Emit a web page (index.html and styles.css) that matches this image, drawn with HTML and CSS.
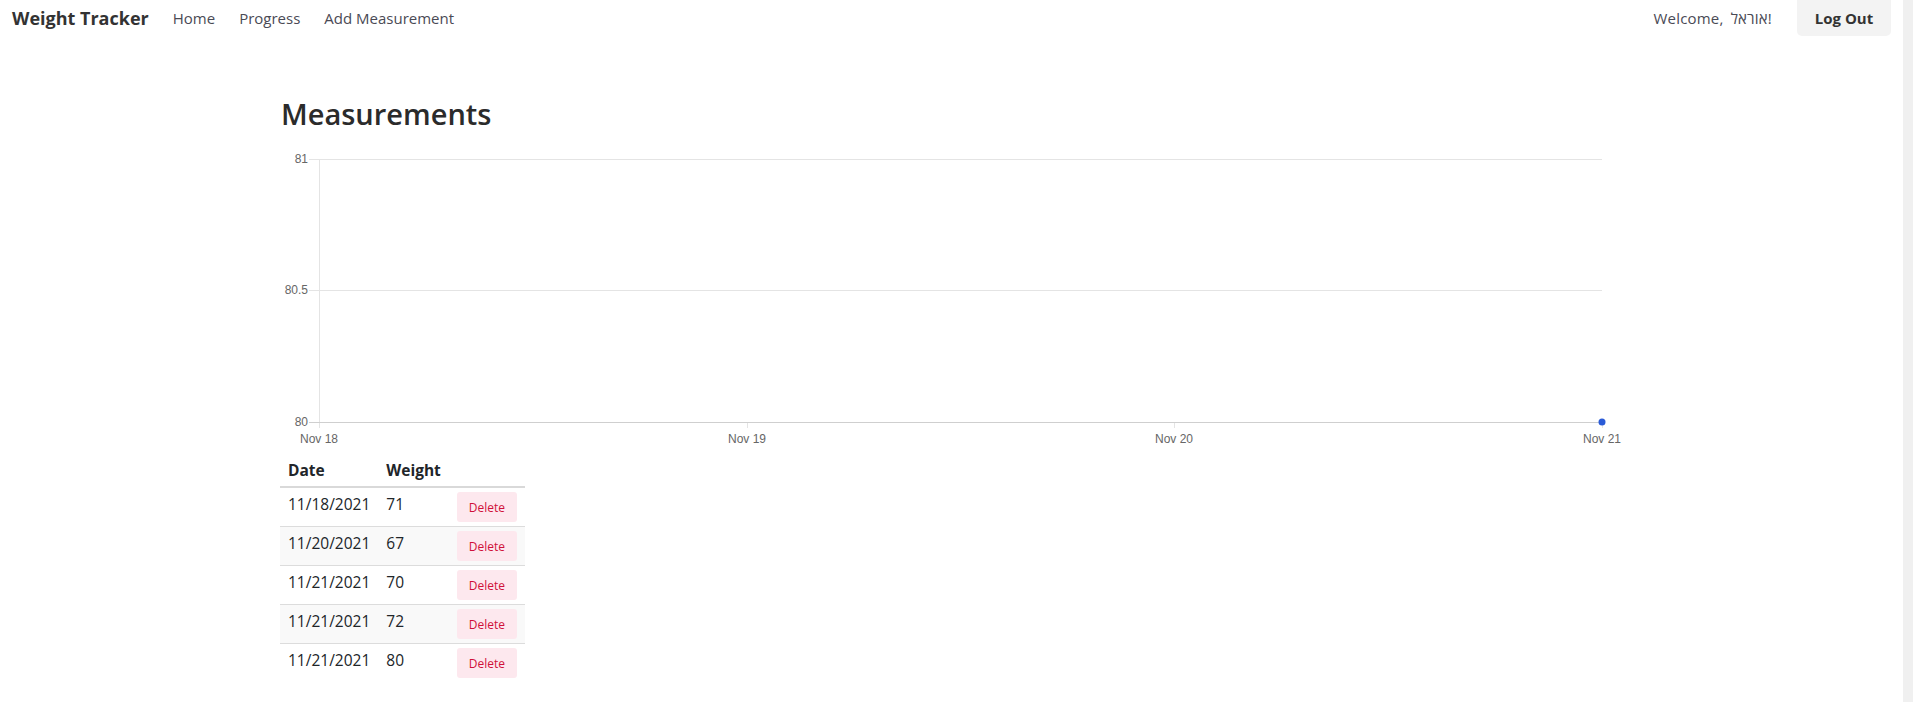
FILE: index.html
```html
<!DOCTYPE html>
<html lang="en">
<head>
  <meta charset="UTF-8" />
  <meta name="viewport" content="width=device-width, initial-scale=1.0" />
  <title>Weight Tracker</title>
  <link rel="stylesheet" href="styles.css">
</head>
<body>
<div class="page">
  <div class="main">
    <nav class="navbar">
      <a class="brand" href="#">Weight Tracker</a>
      <ul class="nav-links">
        <li><a href="#">Home</a></li>
        <li><a href="#">Progress</a></li>
        <li><a href="#">Add Measurement</a></li>
      </ul>
      <div class="nav-right">
        <span class="welcome">Welcome, אוראל!</span>
        <button class="logout">Log Out</button>
      </div>
    </nav>

    <div class="container">
      <h1>Measurements</h1>

      <!-- graphique -->
      <svg class="chart" width="1343" height="304" viewBox="0 0 1343 304">
        <g stroke="#e4e4e4" stroke-width="1">
          <line x1="29" y1="9.5" x2="1322" y2="9.5" />
          <line x1="29" y1="140.5" x2="1322" y2="140.5" />
          <line x1="39.5" y1="9" x2="39.5" y2="278" />
          <line x1="467.5" y1="272" x2="467.5" y2="278" />
          <line x1="894.5" y1="272" x2="894.5" y2="278" />
          <line x1="1322.5" y1="272" x2="1322.5" y2="278" />
        </g>
        <line x1="29" y1="272.5" x2="1322" y2="272.5" stroke="#cfcfcf" stroke-width="1" />
        <g class="tick-y" text-anchor="end">
          <text x="28" y="13">81</text>
          <text x="28" y="144">80.5</text>
          <text x="28" y="276">80</text>
        </g>
        <g class="tick-x" text-anchor="middle">
          <text x="39" y="293">Nov 18</text>
          <text x="467" y="293">Nov 19</text>
          <text x="894" y="293">Nov 20</text>
          <text x="1322" y="293">Nov 21</text>
        </g>
        <circle cx="1322" cy="272" r="3.5" fill="#2a5bd7" />
      </svg>

      <table class="table">
        <thead>
          <tr><th>Date</th><th>Weight</th><th></th></tr>
        </thead>
        <tbody>
          <tr><td>11/18/2021</td><td>71</td><td><button class="btn-delete">Delete</button></td></tr>
          <tr><td>11/20/2021</td><td>67</td><td><button class="btn-delete">Delete</button></td></tr>
          <tr><td>11/21/2021</td><td>70</td><td><button class="btn-delete">Delete</button></td></tr>
          <tr><td>11/21/2021</td><td>72</td><td><button class="btn-delete">Delete</button></td></tr>
          <tr><td>11/21/2021</td><td>80</td><td><button class="btn-delete">Delete</button></td></tr>
        </tbody>
      </table>
    </div>
  </div>
  <div class="scroll-strip"></div>
</div>
</body>
</html>
```

FILE: styles.css
```css
body {
  margin: 0;
  font-family: "Open Sans", "Noto Sans Hebrew", "DejaVu Sans", sans-serif;
  color: #212529;
  background: white;
  overflow: hidden;
}
.page {
  display: flex;
  height: 100vh;
}
.main {
  flex: 1;
}
.scroll-strip {
  width: 10px;
  background: #f0f0f0;
}
.navbar {
  display: flex;
  align-items: flex-start;
  height: 40px;
  padding: 0 12px;
}
.brand {
  font-size: 18px;
  font-weight: 700;
  color: #333;
  text-decoration: none;
  line-height: 36px;
  margin-right: 24px;
}
.nav-links {
  display: flex;
  gap: 24px;
  list-style: none;
  margin: 0;
  padding: 0;
}
.nav-links a {
  font-size: 15px;
  color: #4a4a55;
  text-decoration: none;
  line-height: 36px;
}
.nav-right {
  margin-left: auto;
  display: flex;
  align-items: flex-start;
  gap: 25px;
}
.welcome {
  font-size: 15px;
  color: #4a4a55;
  line-height: 36px;
  word-spacing: 3px;
  letter-spacing: 0.2px;
}
.logout {
  width: 94px;
  height: 36px;
  border: none;
  border-radius: 0 0 5px 5px;
  background: #f3f3f3;
  font-family: inherit;
  font-size: 15px;
  font-weight: 700;
  color: #333;
  cursor: pointer;
}
.container {
  width: 1343px;
  margin: 0 auto;
}
h1 {
  font-size: 29px;
  font-weight: 600;
  color: #2b2b2b;
  margin: 54px 0 0 1px;
  line-height: 40px;
}
.chart {
  display: block;
  margin-top: 16px;
}
.chart text {
  font-family: "Liberation Sans", Arial, sans-serif;
  font-size: 12px;
  fill: #666;
}
.table {
  border-collapse: collapse;
  font-size: 15.5px;
}
.table th {
  text-align: left;
  font-weight: 700;
  padding: 4px 8px;
  line-height: 24px;
  border-bottom: 2px solid #d9d9d9;
}
.table td {
  padding: 4px 8px;
  line-height: 24px;
  vertical-align: top;
  border-bottom: 1px solid #dcdcdc;
}
.table tbody tr:nth-child(even) {
  background: #f9f9f9;
}
.table tbody tr:last-child td {
  border-bottom: none;
}
.btn-delete {
  width: 60px;
  height: 30px;
  border: none;
  border-radius: 3px;
  background: #fde8ee;
  color: #d0103a;
  font-family: inherit;
  font-size: 12px;
  cursor: pointer;
}
```
